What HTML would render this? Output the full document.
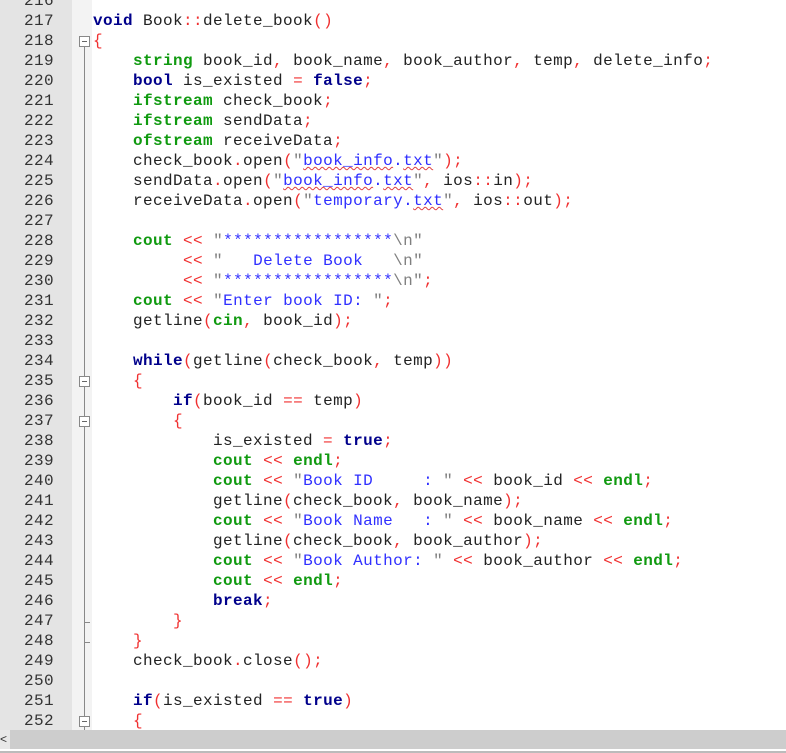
<!DOCTYPE html>
<html><head><meta charset="utf-8"><style>
html,body{margin:0;padding:0;width:786px;height:753px;overflow:hidden;background:#fff;}
#g{position:absolute;left:0;top:0;width:72px;height:730px;background:#e4e4e4;}
#f{position:absolute;left:72px;top:0;width:20px;height:730px;background:#f3f3f3;}
.ln{position:absolute;left:0;width:54px;text-align:right;font:16px "Liberation Mono",monospace;color:#333;height:20px;line-height:20px;letter-spacing:0.4px;}
pre{position:absolute;left:93px;top:-9px;margin:0;font:16px "Liberation Mono",monospace;letter-spacing:0.4px;line-height:20px;color:#222;}
.k{color:#00008b;font-weight:bold}
.t{color:#109a10;font-weight:bold}
.o{color:#f03030}
.s{color:#3030ff}
.q{color:#808080}
.w{text-decoration:underline wavy #e04040;text-decoration-thickness:1px}
.box{position:absolute;left:79px;width:9px;height:9px;border:1px solid #888;background:#fff;}
.box:after{content:"";position:absolute;left:2px;top:4px;width:5px;height:1px;background:#666;}
.vl{position:absolute;left:84px;width:1px;background:#888;}
.tk{position:absolute;left:84px;width:6px;height:1px;background:#888;}
#sb{position:absolute;left:0;top:730px;width:786px;height:19px;background:#cdcdcd;}
#sbl{position:absolute;left:0;top:730px;width:10px;height:19px;background:#e8e8e8;font:12px "Liberation Sans",sans-serif;color:#333;line-height:19px;}
#bl{position:absolute;left:0;top:751px;width:786px;height:2px;background:#bbb;}
</style></head><body>
<div id="g"></div><div id="f"></div>
<div class="ln" style="top:-9px">216</div>
<div class="ln" style="top:11px">217</div>
<div class="ln" style="top:31px">218</div>
<div class="ln" style="top:51px">219</div>
<div class="ln" style="top:71px">220</div>
<div class="ln" style="top:91px">221</div>
<div class="ln" style="top:111px">222</div>
<div class="ln" style="top:131px">223</div>
<div class="ln" style="top:151px">224</div>
<div class="ln" style="top:171px">225</div>
<div class="ln" style="top:191px">226</div>
<div class="ln" style="top:211px">227</div>
<div class="ln" style="top:231px">228</div>
<div class="ln" style="top:251px">229</div>
<div class="ln" style="top:271px">230</div>
<div class="ln" style="top:291px">231</div>
<div class="ln" style="top:311px">232</div>
<div class="ln" style="top:331px">233</div>
<div class="ln" style="top:351px">234</div>
<div class="ln" style="top:371px">235</div>
<div class="ln" style="top:391px">236</div>
<div class="ln" style="top:411px">237</div>
<div class="ln" style="top:431px">238</div>
<div class="ln" style="top:451px">239</div>
<div class="ln" style="top:471px">240</div>
<div class="ln" style="top:491px">241</div>
<div class="ln" style="top:511px">242</div>
<div class="ln" style="top:531px">243</div>
<div class="ln" style="top:551px">244</div>
<div class="ln" style="top:571px">245</div>
<div class="ln" style="top:591px">246</div>
<div class="ln" style="top:611px">247</div>
<div class="ln" style="top:631px">248</div>
<div class="ln" style="top:651px">249</div>
<div class="ln" style="top:671px">250</div>
<div class="ln" style="top:691px">251</div>
<div class="ln" style="top:711px">252</div>
<div class="vl" style="top:45px;height:685px"></div>
<div class="box" style="top:36px"></div>
<div class="box" style="top:376px"></div>
<div class="box" style="top:416px"></div>
<div class="tk" style="top:622px"></div>
<div class="tk" style="top:642px"></div>
<div class="box" style="top:716px"></div>
<pre>

<span class="k">void</span> Book<span class="o">::</span>delete_book<span class="o">()</span>
<span class="o">{</span>
    <span class="t">string</span> book_id<span class="o">,</span> book_name<span class="o">,</span> book_author<span class="o">,</span> temp<span class="o">,</span> delete_info<span class="o">;</span>
    <span class="k">bool</span> is_existed <span class="o">=</span> <span class="k">false</span><span class="o">;</span>
    <span class="t">ifstream</span> check_book<span class="o">;</span>
    <span class="t">ifstream</span> sendData<span class="o">;</span>
    <span class="t">ofstream</span> receiveData<span class="o">;</span>
    check_book<span class="o">.</span>open<span class="o">(</span><span class="q">"</span><span class="s"><span class="w">book_info</span>.<span class="w">txt</span></span><span class="q">"</span><span class="o">);</span>
    sendData<span class="o">.</span>open<span class="o">(</span><span class="q">"</span><span class="s"><span class="w">book_info</span>.<span class="w">txt</span></span><span class="q">"</span><span class="o">,</span> ios<span class="o">::</span>in<span class="o">);</span>
    receiveData<span class="o">.</span>open<span class="o">(</span><span class="q">"</span><span class="s">temporary.<span class="w">txt</span></span><span class="q">"</span><span class="o">,</span> ios<span class="o">::</span>out<span class="o">);</span>

    <span class="t">cout</span> <span class="o">&lt;&lt;</span> <span class="q">"</span><span class="s">*****************</span><span class="q">\n"</span>
         <span class="o">&lt;&lt;</span> <span class="q">"</span><span class="s">   Delete Book   </span><span class="q">\n"</span>
         <span class="o">&lt;&lt;</span> <span class="q">"</span><span class="s">*****************</span><span class="q">\n"</span><span class="o">;</span>
    <span class="t">cout</span> <span class="o">&lt;&lt;</span> <span class="q">"</span><span class="s">Enter book ID: </span><span class="q">"</span><span class="o">;</span>
    getline<span class="o">(</span><span class="t">cin</span><span class="o">,</span> book_id<span class="o">);</span>

    <span class="k">while</span><span class="o">(</span>getline<span class="o">(</span>check_book<span class="o">,</span> temp<span class="o">))</span>
    <span class="o">{</span>
        <span class="k">if</span><span class="o">(</span>book_id <span class="o">==</span> temp<span class="o">)</span>
        <span class="o">{</span>
            is_existed <span class="o">=</span> <span class="k">true</span><span class="o">;</span>
            <span class="t">cout</span> <span class="o">&lt;&lt;</span> <span class="t">endl</span><span class="o">;</span>
            <span class="t">cout</span> <span class="o">&lt;&lt;</span> <span class="q">"</span><span class="s">Book ID     : </span><span class="q">"</span> <span class="o">&lt;&lt;</span> book_id <span class="o">&lt;&lt;</span> <span class="t">endl</span><span class="o">;</span>
            getline<span class="o">(</span>check_book<span class="o">,</span> book_name<span class="o">);</span>
            <span class="t">cout</span> <span class="o">&lt;&lt;</span> <span class="q">"</span><span class="s">Book Name   : </span><span class="q">"</span> <span class="o">&lt;&lt;</span> book_name <span class="o">&lt;&lt;</span> <span class="t">endl</span><span class="o">;</span>
            getline<span class="o">(</span>check_book<span class="o">,</span> book_author<span class="o">);</span>
            <span class="t">cout</span> <span class="o">&lt;&lt;</span> <span class="q">"</span><span class="s">Book Author: </span><span class="q">"</span> <span class="o">&lt;&lt;</span> book_author <span class="o">&lt;&lt;</span> <span class="t">endl</span><span class="o">;</span>
            <span class="t">cout</span> <span class="o">&lt;&lt;</span> <span class="t">endl</span><span class="o">;</span>
            <span class="k">break</span><span class="o">;</span>
        <span class="o">}</span>
    <span class="o">}</span>
    check_book<span class="o">.</span>close<span class="o">();</span>

    <span class="k">if</span><span class="o">(</span>is_existed <span class="o">==</span> <span class="k">true</span><span class="o">)</span>
    <span class="o">{</span>
</pre>
<div id="sb"></div><div id="sbl">&lt;</div><div id="bl"></div>
</body></html>
